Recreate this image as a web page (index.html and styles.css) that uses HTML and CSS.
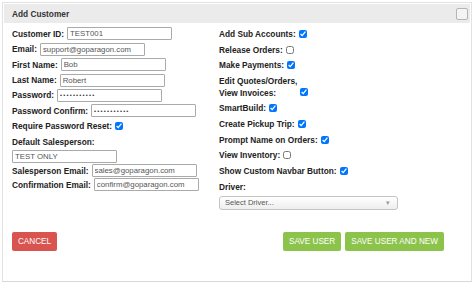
FILE: index.html
```html
<!DOCTYPE html>
<html>
<head>
	<meta charset="utf-8">
	<title>Add Customer</title>
	<link rel="stylesheet" href="styles.css">
</head>
<body>
	<div class="dialog">
		<div class="dlg-head">
			<span class="dlg-title">Add Customer</span>
			<span class="dlg-close"></span>
		</div>
		<div class="dlg-body">
			<ul class="form left">
				<li><label>Customer ID:</label><input type="text" value="TEST001"/></li>
				<li><label>Email:</label><input type="text" value="support@goparagon.com"/></li>
				<li><label>First Name:</label><input type="text" value="Bob"/></li>
				<li><label>Last Name:</label><input type="text" value="Robert"/></li>
				<li><label>Password:</label><input type="password" value="supersecret"/></li>
				<li><label>Password Confirm:</label><input type="password" value="supersecret"/></li>
				<li><label>Require Password Reset:</label><input type="checkbox" checked/></li>
				<li><label>Default Salesperson:</label></li>
				<li class="tight"><input type="text" value="TEST ONLY"/></li>
				<li class="tight"><label>Salesperson Email:</label><input type="text" value="sales@goparagon.com"/></li>
				<li class="tight"><label>Confirmation Email:</label><input type="text" value="confirm@goparagon.com"/></li>
			</ul>
			<ul class="form right">
				<li><label>Add Sub Accounts:</label><input type="checkbox" checked/></li>
				<li><label>Release Orders:</label><input type="checkbox"/></li>
				<li><label>Make Payments:</label><input type="checkbox" checked/></li>
				<li class="double"><label class="wrap">Edit Quotes/Orders,<br>View Invoices:</label><input type="checkbox" checked/></li>
				<li><label>SmartBuild:</label><input type="checkbox" checked/></li>
				<li><label>Create Pickup Trip:</label><input type="checkbox" checked/></li>
				<li><label>Prompt Name on Orders:</label><input type="checkbox" checked/></li>
				<li><label>View Inventory:</label><input type="checkbox"/></li>
				<li><label>Show Custom Navbar Button:</label><input type="checkbox" checked/></li>
				<li class="driver"><label>Driver:</label></li>
				<li class="select-row"><div class="select">Select Driver...</div></li>
			</ul>
		</div>
		<div class="dlg-foot">
			<button class="btn btn-red">CANCEL</button>
			<div class="btn-group">
				<button class="btn btn-green">SAVE USER</button>
				<button class="btn btn-green">SAVE USER AND NEW</button>
			</div>
		</div>
	</div>
</body>
</html>
```
FILE: styles.css
```css
body {
	margin: 0;
	background: #fff;
	font-family: "Liberation Sans", Arial, sans-serif;
	color: #222;
}

.dialog {
	margin: 2px 2px 0 2px;
	height: 280px;
	box-sizing: border-box;
	border: 1px solid #e2e2e2;
	border-bottom-color: #d8d8d8;
	background: #fff;
}

.dlg-head {
	margin: 1px 1px 0 1px;
	height: 19px;
	background: #ebebeb;
	display: flex;
	align-items: center;
	justify-content: space-between;
	padding: 0 2px 0 8px;
}

.dlg-title {
	font-weight: bold;
	font-size: 8.3px;
	color: #333;
}

.dlg-close {
	width: 10px;
	height: 10px;
	border: 1px solid #b5b5b5;
	border-radius: 2px;
	background: #f4f4f4;
}

.dlg-body {
	display: flex;
	padding: 3px 0 0 9px;
}

ul.form {
	list-style-type: none;
	margin: 0;
	padding: 0;
}
ul.form.left { width: 207px; }

ul.form li {
	display: flex;
	align-items: center;
	height: 15.45px;
	font-size: 8.3px;
}
ul.form.left li.tight { height: 14px; }
ul.form.right li { height: 15.7px; }
ul.form.right li.double { height: 27.4px; }
ul.form.right li.driver { height: 17px; }
ul.form.right li.select-row { height: 14px; }

ul.form label {
	font-weight: bold;
	color: #222;
	white-space: nowrap;
}
ul.form label.wrap {
	width: 80px;
	line-height: 12px;
}

ul.form input[type=text],
ul.form input[type=password] {
	width: 105px;
	height: 13px;
	box-sizing: border-box;
	margin: 0 0 0 3px;
	padding: 0 2px;
	border: 1px solid #aaa;
	border-radius: 1px;
	font-family: "Liberation Sans", Arial, sans-serif;
	font-size: 7.8px;
	color: #555;
	outline: none;
}
ul.form li.tight > input:first-child { margin-left: 0; }

ul.form input[type=password] {
	font-size: 5.8px;
	letter-spacing: 1.2px;
	color: #333;
}

ul.form input[type=checkbox] {
	width: 8px;
	height: 8px;
	margin: 0 0 0 3px;
}
ul.form li.double input[type=checkbox] {
	align-self: flex-end;
	margin: 0 0 4px 1px;
}

.select {
	position: relative;
	width: 179px;
	height: 14px;
	box-sizing: border-box;
	border: 1px solid #c4c4c4;
	border-radius: 3px;
	background: linear-gradient(#ffffff, #eeeeee);
	font-size: 7.5px;
	color: #555;
	line-height: 12px;
	padding-left: 5px;
}
.select::after {
	content: "\25BE";
	position: absolute;
	right: 7px;
	top: 0;
	font-size: 7px;
	color: #999;
}

.dlg-foot {
	display: flex;
	justify-content: space-between;
	padding: 22px 27px 0 9px;
}

.btn-group {
	display: flex;
	gap: 4px;
}

.btn {
	height: 19px;
	border: none;
	border-radius: 2px;
	color: #fff;
	font-family: "Liberation Sans", Arial, sans-serif;
	font-size: 8.2px;
	padding: 0 6px;
	cursor: pointer;
}
.btn-red { background: #d9534f; width: 45px; padding: 0; }
.btn-green { background: #8cc34b; }
```
